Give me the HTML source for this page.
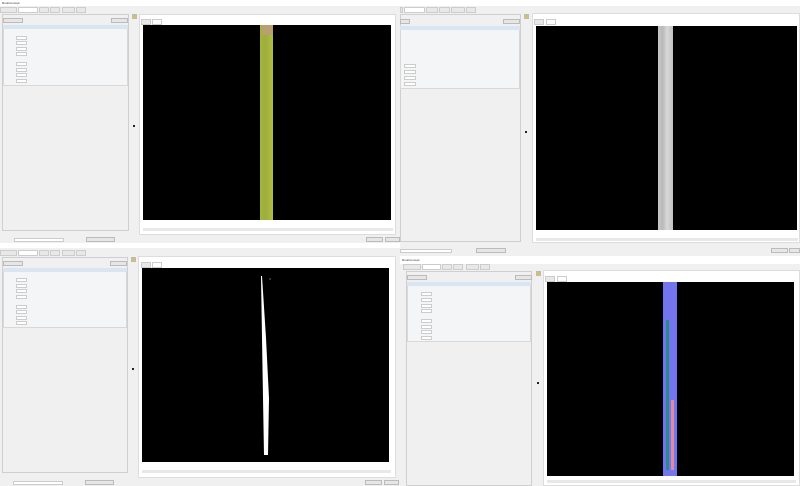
<!DOCTYPE html>
<html><head><meta charset="utf-8"><style>
*{margin:0;padding:0;box-sizing:border-box}
body{width:800px;height:486px;overflow:hidden;background:#f0f0f0;font-family:"Liberation Sans",sans-serif;font-size:3px;color:#333;position:relative}
.a{position:absolute}
.w{background:#fff}
.blk{background:#000}
.panel{background:#f0f0f0;border:1px solid #cfcfcf}
.grp{background:#f4f5f6;border:1px solid #d8d8d8}
.hdr{background:#d9e5f0}
.btn{background:#e6e6e6;border:1px solid #bbb}
.tab{background:#e8e8e8;border:1px solid #ccc;height:6px}
.tab.on{background:#fff}
.fld{background:#fff;border:1px solid #ccc}
</style></head><body>

<!-- ===== Window 1 ===== -->
<div class="a w" style="left:0;top:0;width:400px;height:6px"></div>
<div class="a" style="left:2px;top:1px;font-size:3px">RootConcept</div>
<div class="a tab" style="left:0;top:7px;width:17px"></div>
<div class="a tab on" style="left:18px;top:7px;width:20px"></div>
<div class="a tab" style="left:39px;top:7px;width:10px"></div>
<div class="a tab" style="left:50px;top:7px;width:10px"></div>
<div class="a tab" style="left:62px;top:7px;width:13px"></div>
<div class="a tab" style="left:76px;top:7px;width:10px"></div>
<div class="a panel" style="left:2px;top:14px;width:127px;height:217px"></div>
<div class="a btn" style="left:3px;top:18px;width:20px;height:5px"></div>
<div class="a btn" style="left:111px;top:18px;width:17px;height:5px"></div>
<div class="a grp" style="left:3px;top:25px;width:125px;height:61px"></div>
<div class="a hdr" style="left:3px;top:25px;width:125px;height:4px"></div>
<div class="a fld" style="left:16px;top:36px;width:11px;height:4px"></div>
<div class="a fld" style="left:16px;top:41px;width:11px;height:4px"></div>
<div class="a fld" style="left:16px;top:47px;width:11px;height:4px"></div>
<div class="a fld" style="left:16px;top:52px;width:11px;height:4px"></div>
<div class="a fld" style="left:16px;top:62px;width:11px;height:4px"></div>
<div class="a fld" style="left:16px;top:68px;width:11px;height:4px"></div>
<div class="a fld" style="left:16px;top:73px;width:11px;height:4px"></div>
<div class="a fld" style="left:16px;top:79px;width:11px;height:4px"></div>
<div class="a btn" style="left:132px;top:14px;width:5px;height:5px;background:#d8c060"></div>
<div class="a" style="left:133px;top:125px;width:2px;height:2px;background:#222"></div>
<div class="a w" style="left:139px;top:14px;width:257px;height:221px;border:1px solid #ddd"></div>
<div class="a tab" style="left:141px;top:19px;width:10px"></div>
<div class="a tab on" style="left:152px;top:19px;width:10px"></div>
<div class="a blk" style="left:143px;top:25px;width:248px;height:195px"></div>
<div class="a" style="left:260px;top:25px;width:13px;height:195px;background:linear-gradient(90deg,#a8b43a,#9cae3c 40%,#b0bd45)"></div>
<div class="a" style="left:262px;top:25px;width:11px;height:10px;background:#b8a070"></div>
<div class="a" style="left:143px;top:228px;width:250px;height:3px;background:#e8e8e8"></div>
<div class="a" style="left:0;top:236px;width:400px;height:7px;background:#f0f0f0"></div>
<div class="a fld" style="left:14px;top:238px;width:50px;height:4px"></div>
<div class="a btn" style="left:86px;top:237px;width:29px;height:5px"></div>
<div class="a btn" style="left:366px;top:237px;width:17px;height:5px"></div>
<div class="a btn" style="left:385px;top:237px;width:15px;height:5px"></div>

<!-- ===== Window 2 ===== -->
<div class="a w" style="left:400px;top:0;width:400px;height:6px"></div>
<div class="a tab" style="left:400px;top:7px;width:3px"></div>
<div class="a tab on" style="left:404px;top:7px;width:21px"></div>
<div class="a tab" style="left:426px;top:7px;width:12px"></div>
<div class="a tab" style="left:439px;top:7px;width:11px"></div>
<div class="a tab" style="left:451px;top:7px;width:14px"></div>
<div class="a tab" style="left:466px;top:7px;width:10px"></div>
<div class="a panel" style="left:400px;top:14px;width:121px;height:228px"></div>
<div class="a btn" style="left:400px;top:19px;width:10px;height:5px"></div>
<div class="a btn" style="left:503px;top:19px;width:17px;height:5px"></div>
<div class="a grp" style="left:400px;top:26px;width:120px;height:63px"></div>
<div class="a hdr" style="left:400px;top:26px;width:120px;height:4px"></div>
<div class="a fld" style="left:404px;top:64px;width:12px;height:4px"></div>
<div class="a fld" style="left:404px;top:70px;width:12px;height:4px"></div>
<div class="a fld" style="left:404px;top:76px;width:12px;height:4px"></div>
<div class="a fld" style="left:404px;top:82px;width:12px;height:4px"></div>
<div class="a btn" style="left:524px;top:14px;width:5px;height:5px;background:#d8c060"></div>
<div class="a" style="left:525px;top:131px;width:2px;height:2px;background:#222"></div>
<div class="a w" style="left:532px;top:13px;width:268px;height:230px;border:1px solid #ddd"></div>
<div class="a tab" style="left:534px;top:19px;width:10px"></div>
<div class="a tab on" style="left:546px;top:19px;width:10px"></div>
<div class="a blk" style="left:536px;top:26px;width:261px;height:204px"></div>
<div class="a" style="left:658px;top:26px;width:15px;height:204px;background:linear-gradient(90deg,#c8c8c8,#b8b8b8 30%,#d8d8d8 60%,#c0c0c0)"></div>
<div class="a" style="left:536px;top:238px;width:262px;height:3px;background:#e8e8e8"></div>
<div class="a" style="left:400px;top:243px;width:400px;height:10px;background:#f0f0f0"></div>
<div class="a fld" style="left:400px;top:249px;width:52px;height:4px"></div>
<div class="a btn" style="left:476px;top:248px;width:30px;height:5px"></div>
<div class="a btn" style="left:771px;top:248px;width:17px;height:5px"></div>
<div class="a btn" style="left:789px;top:248px;width:11px;height:5px"></div>

<!-- ===== Window 3 ===== -->
<div class="a w" style="left:0;top:243px;width:400px;height:5px"></div>
<div class="a tab" style="left:0;top:250px;width:17px"></div>
<div class="a tab on" style="left:18px;top:250px;width:20px"></div>
<div class="a tab" style="left:39px;top:250px;width:10px"></div>
<div class="a tab" style="left:50px;top:250px;width:10px"></div>
<div class="a tab" style="left:62px;top:250px;width:13px"></div>
<div class="a tab" style="left:76px;top:250px;width:10px"></div>
<div class="a panel" style="left:2px;top:257px;width:126px;height:216px"></div>
<div class="a btn" style="left:3px;top:261px;width:20px;height:5px"></div>
<div class="a btn" style="left:110px;top:261px;width:17px;height:5px"></div>
<div class="a grp" style="left:3px;top:268px;width:124px;height:60px"></div>
<div class="a hdr" style="left:3px;top:268px;width:124px;height:4px"></div>
<div class="a fld" style="left:16px;top:278px;width:11px;height:4px"></div>
<div class="a fld" style="left:16px;top:284px;width:11px;height:4px"></div>
<div class="a fld" style="left:16px;top:289px;width:11px;height:4px"></div>
<div class="a fld" style="left:16px;top:295px;width:11px;height:4px"></div>
<div class="a fld" style="left:16px;top:305px;width:11px;height:4px"></div>
<div class="a fld" style="left:16px;top:310px;width:11px;height:4px"></div>
<div class="a fld" style="left:16px;top:316px;width:11px;height:4px"></div>
<div class="a fld" style="left:16px;top:321px;width:11px;height:4px"></div>
<div class="a btn" style="left:131px;top:257px;width:5px;height:5px;background:#d8c060"></div>
<div class="a" style="left:132px;top:368px;width:2px;height:2px;background:#222"></div>
<div class="a w" style="left:138px;top:256px;width:258px;height:222px;border:1px solid #ddd"></div>
<div class="a tab" style="left:141px;top:262px;width:10px"></div>
<div class="a tab on" style="left:152px;top:262px;width:10px"></div>
<div class="a blk" style="left:142px;top:268px;width:247px;height:194px"></div>
<svg class="a" style="left:142px;top:268px" width="247" height="194"><path d="M119 8 L120 8 L124 70 L127 130 L126 187 L122 187 L121 130 L120 70 Z" fill="#fff"/><circle cx="128" cy="11" r="0.6" fill="#aaa"/></svg>
<div class="a" style="left:142px;top:470px;width:249px;height:3px;background:#e8e8e8"></div>
<div class="a" style="left:0;top:479px;width:400px;height:7px;background:#f0f0f0"></div>
<div class="a fld" style="left:13px;top:481px;width:50px;height:4px"></div>
<div class="a btn" style="left:85px;top:480px;width:29px;height:5px"></div>
<div class="a btn" style="left:365px;top:480px;width:17px;height:5px"></div>
<div class="a btn" style="left:384px;top:480px;width:15px;height:5px"></div>

<!-- ===== Window 4 ===== -->
<div class="a w" style="left:400px;top:256px;width:400px;height:8px"></div>
<div class="a" style="left:402px;top:258px;font-size:3px">RootConcept</div>
<div class="a tab" style="left:403px;top:264px;width:18px"></div>
<div class="a tab on" style="left:422px;top:264px;width:19px"></div>
<div class="a tab" style="left:442px;top:264px;width:10px"></div>
<div class="a tab" style="left:453px;top:264px;width:10px"></div>
<div class="a tab" style="left:466px;top:264px;width:13px"></div>
<div class="a tab" style="left:480px;top:264px;width:10px"></div>
<div class="a panel" style="left:406px;top:271px;width:126px;height:215px"></div>
<div class="a btn" style="left:407px;top:275px;width:20px;height:5px"></div>
<div class="a btn" style="left:515px;top:275px;width:17px;height:5px"></div>
<div class="a grp" style="left:407px;top:282px;width:124px;height:60px"></div>
<div class="a hdr" style="left:407px;top:282px;width:124px;height:4px"></div>
<div class="a fld" style="left:421px;top:292px;width:11px;height:4px"></div>
<div class="a fld" style="left:421px;top:298px;width:11px;height:4px"></div>
<div class="a fld" style="left:421px;top:304px;width:11px;height:4px"></div>
<div class="a fld" style="left:421px;top:309px;width:11px;height:4px"></div>
<div class="a fld" style="left:421px;top:319px;width:11px;height:4px"></div>
<div class="a fld" style="left:421px;top:325px;width:11px;height:4px"></div>
<div class="a fld" style="left:421px;top:330px;width:11px;height:4px"></div>
<div class="a fld" style="left:421px;top:336px;width:11px;height:4px"></div>
<div class="a btn" style="left:536px;top:271px;width:5px;height:5px;background:#d8c060"></div>
<div class="a" style="left:537px;top:382px;width:2px;height:2px;background:#222"></div>
<div class="a w" style="left:543px;top:270px;width:257px;height:216px;border:1px solid #ddd"></div>
<div class="a tab" style="left:545px;top:276px;width:10px"></div>
<div class="a tab on" style="left:557px;top:276px;width:10px"></div>
<div class="a blk" style="left:547px;top:282px;width:247px;height:194px"></div>
<div class="a" style="left:663px;top:282px;width:14px;height:194px;background:#7474ee"></div>
<div class="a" style="left:666px;top:320px;width:3px;height:150px;background:#2a8a8a"></div>
<div class="a" style="left:671px;top:400px;width:3px;height:70px;background:#e08aa0"></div>
<div class="a" style="left:547px;top:480px;width:249px;height:3px;background:#e8e8e8"></div>
</body></html>
